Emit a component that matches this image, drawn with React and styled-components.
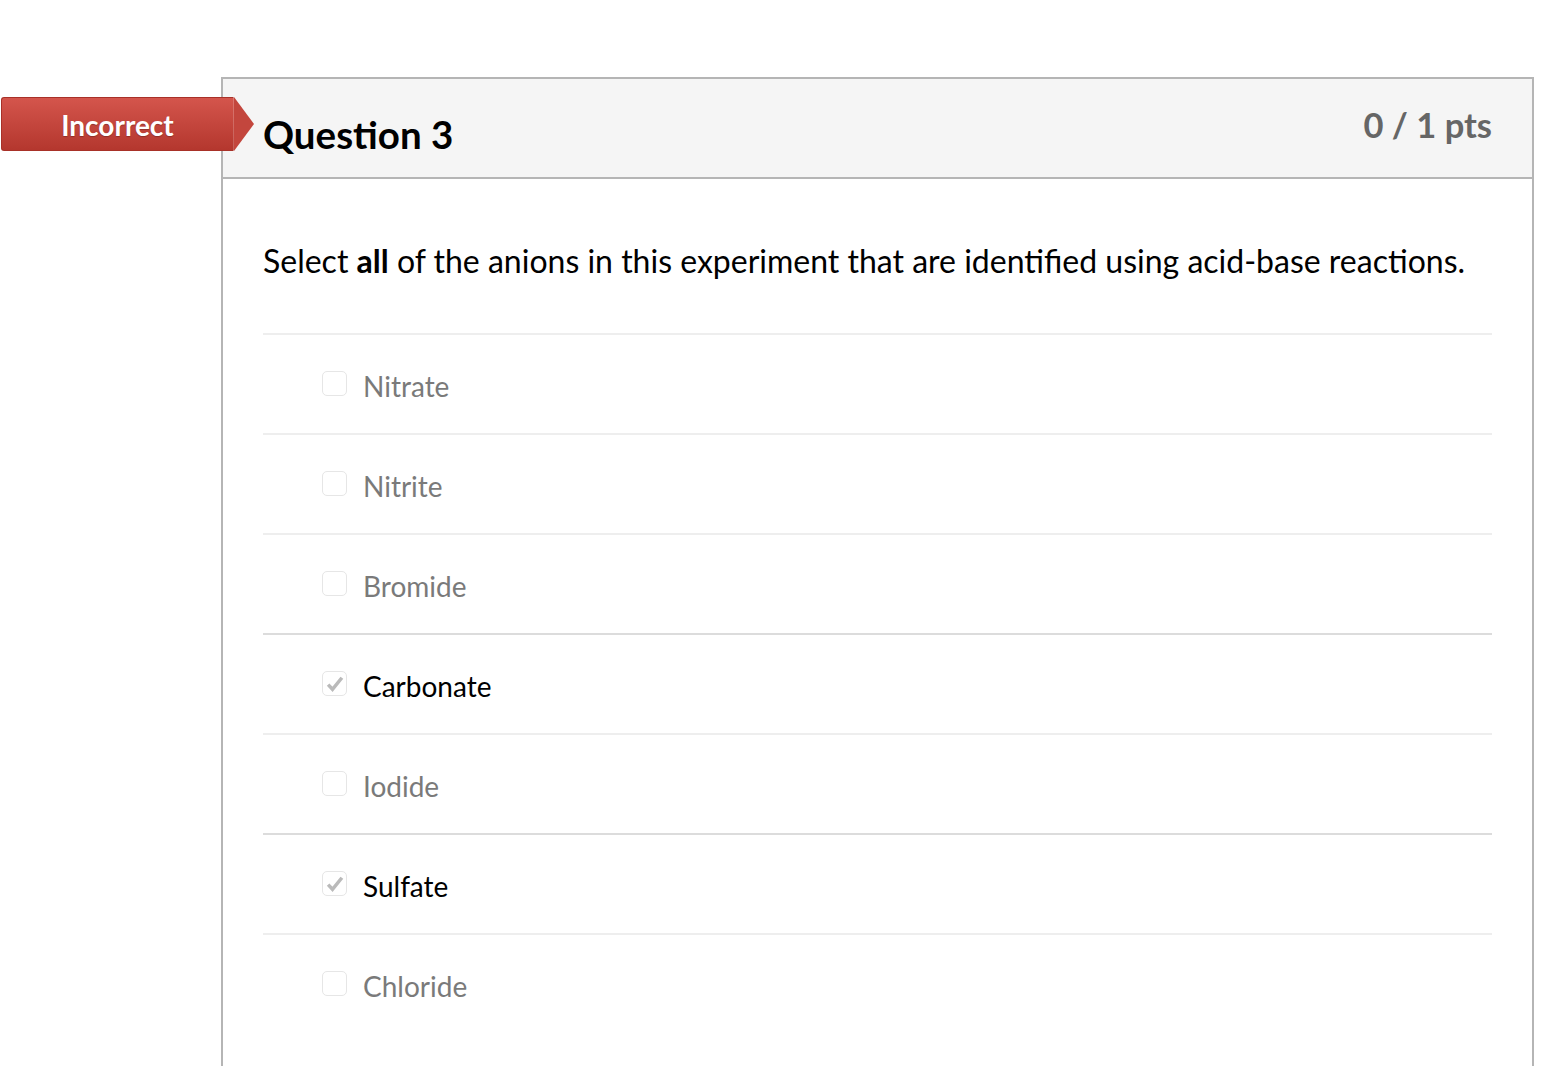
import React from 'react';
import styled, { createGlobalStyle } from 'styled-components';

const GlobalStyle = createGlobalStyle`
  html, body {
    margin: 0;
    padding: 0;
    background: #fff;
    font-family: Lato, "Open Sans", sans-serif;
    overflow: hidden;
  }
`;

const Page = styled.div`
  padding: 77px 0 0 221px;
  height: 1066px;
  box-sizing: border-box;
  position: relative;
`;

const Panel = styled.div`
  width: 1313px;
  min-height: 1100px;
  box-sizing: border-box;
  border: 2px solid #b5b5b5;
  border-bottom: none;
  position: relative;
`;

const Header = styled.div`
  height: 100px;
  box-sizing: border-box;
  background: #f5f5f5;
  border-bottom: 2px solid #b5b5b5;
  display: flex;
  justify-content: space-between;
  align-items: flex-start;
  padding: 0 40px 0 40px;
`;

const Title = styled.h2`
  margin: 32px 0 0;
  font-size: 38.5px;
  font-weight: 700;
  color: #000;
  line-height: 46px;
`;

const Points = styled.div`
  margin-top: 24px;
  font-size: 34.5px;
  font-weight: 700;
  color: #666;
  line-height: 44px;
`;

const Badge = styled.div`
  position: absolute;
  left: -222px;
  top: 18px;
  width: 233px;
  height: 54px;
  box-sizing: border-box;
  background: linear-gradient(#d4554c, #b4372e);
  border: 1px solid #a83128;
  border-right: 1px solid rgba(255, 255, 255, 0.2);
  border-radius: 3px 0 0 3px;
  color: #fff;
  font-size: 28px;
  font-weight: 700;
  display: flex;
  align-items: center;
  justify-content: center;
  padding-top: 2px;
  text-shadow: 0 1px 1px rgba(0, 0, 0, 0.25);

  &::after {
    content: '';
    position: absolute;
    right: -21px;
    top: -1px;
    border-top: 27px solid transparent;
    border-bottom: 27px solid transparent;
    border-left: 20px solid #c3463d;
  }
`;

const Body = styled.div`
  padding: 60px 40px 0 40px;
`;

const Prompt = styled.p`
  margin: 0 0 50px;
  font-size: 32px;
  line-height: 44px;
  color: #000;

  strong {
    font-weight: 700;
  }
`;

const AnswerList = styled.div`
  display: flex;
  flex-direction: column;
`;

const Answer = styled.label`
  height: 100px;
  box-sizing: border-box;
  border-top: ${(p) => (p.$strong ? '2px solid #dcdcdc' : '2px solid #eeeeee')};
  display: flex;
  align-items: center;
  padding: 4px 0 0 59px;
  gap: 16px;
  font-size: 28px;
  color: ${(p) => (p.$checked ? '#000' : '#7a7a7a')};
`;

const Box = styled.span`
  width: 25px;
  height: 25px;
  box-sizing: border-box;
  border: 1px solid #e6e6e6;
  border-radius: 5px;
  background: #fff;
  display: flex;
  align-items: center;
  justify-content: center;
  margin-top: -5px;
`;

const Text = styled.span`
  line-height: 1;
`;

const answers = [
  { label: 'Nitrate' },
  { label: 'Nitrite' },
  { label: 'Bromide' },
  { label: 'Carbonate', checked: true },
  { label: 'Iodide' },
  { label: 'Sulfate', checked: true },
  { label: 'Chloride' },
];

export default function App() {
  return (
    <>
      <GlobalStyle />
      <Page>
        <Panel>
          <Badge>Incorrect</Badge>
          <Header>
            <Title>Question 3</Title>
            <Points>0 / 1 pts</Points>
          </Header>
          <Body>
            <Prompt>
              Select <strong>all</strong> of the anions in this experiment that are identified
              using acid-base reactions.
            </Prompt>
            <AnswerList>
              {answers.map((a, i) => (
                <Answer key={a.label} $checked={a.checked} $strong={i > 0 && a.checked}>
                  <Box>
                    {a.checked && (
                      <svg width="20" height="20" viewBox="0 0 16 16">
                        <path d="M2.5 8.5 L6 12.2 L13.5 3" fill="none" stroke="#bababa" strokeWidth="2.8" />
                      </svg>
                    )}
                  </Box>
                  <Text>{a.label}</Text>
                </Answer>
              ))}
            </AnswerList>
          </Body>
        </Panel>
      </Page>
    </>
  );
}
